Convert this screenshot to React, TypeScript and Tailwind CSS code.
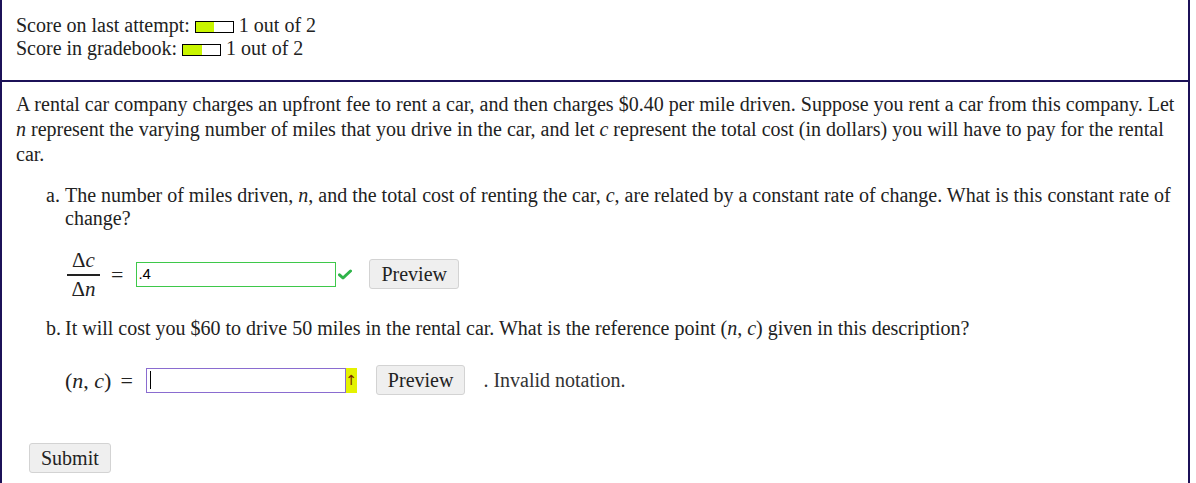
import React from "react";

function ScoreBar() {
  return (
    <span className="inline-block h-[12px] w-[39px] border border-black align-[-1px]">
      <span className="block h-full w-1/2 bg-[#c8f500]" />
    </span>
  );
}

function Check() {
  return (
    <svg viewBox="0 0 14 11" className="h-[11px] w-[14px]" aria-hidden>
      <path
        d="M1.5 5.8 L5 9 L12.5 2"
        fill="none"
        stroke="#2fb44a"
        strokeWidth="3"
        strokeLinecap="round"
        strokeLinejoin="round"
      />
    </svg>
  );
}

function Btn({ children }: { children: React.ReactNode }) {
  return (
    <button className="h-[30px] rounded-[3px] border border-[#d3d3d3] bg-[#efefef] px-[11px] text-[20px] leading-none text-[#222]">
      {children}
    </button>
  );
}

export default function App() {
  return (
    <div className="h-[483px] w-[1190px] border-x-2 border-[#1c1158] bg-white font-['Liberation_Serif',serif] text-[20px] text-[#222]">
      <div className="h-[82px] border-b-2 border-[#1c1158] pl-[14px] pt-[14px] leading-[23px]">
        <div>
          Score on last attempt: <ScoreBar /> 1 out of 2
        </div>
        <div>
          Score in gradebook: <ScoreBar /> 1 out of 2
        </div>
      </div>

      <div className="pl-[14px] pr-[12px] pt-[10px]">
        <p className="leading-[25px]">
          A rental car company charges an upfront fee to rent a car, and then charges $0.40 per mile driven. Suppose you rent a car from this company. Let{" "}
          <i>n</i> represent the varying number of miles that you drive in the car, and let <i>c</i> represent the total cost (in dollars) you will have to pay for the rental car.
        </p>

        <div className="mt-[17px] flex pl-[30px]">
          <span className="w-[19px] shrink-0 leading-[23px]">a.</span>
          <div className="flex-1">
            <p className="leading-[23px]">
              The number of miles driven, <i>n</i>, and the total cost of renting the car, <i>c</i>, are related by a constant rate of change. What is this constant rate of change?
            </p>

            <div className="mt-[20px] flex h-[48px] items-center">
              <span className="inline-flex flex-col items-center px-[2px] text-[21px] leading-[20px]">
                <span>
                  Δ<i>c</i>
                </span>
                <span className="mb-[3px] mt-[4px] h-[2px] w-[33px] bg-[#222]" />
                <span>
                  Δ<i>n</i>
                </span>
              </span>
              <span className="ml-[9px] text-[22px]">=</span>
              <span className="ml-[13px] flex h-[25px] w-[200px] items-center border border-[#3ec84a] px-[1px] font-['Liberation_Sans',sans-serif] text-[15px] text-black">
                .4
              </span>
              <span className="ml-[2px]">
                <Check />
              </span>
              <span className="ml-[17px]">
                <Btn>Preview</Btn>
              </span>
            </div>
          </div>
        </div>

        <div className="mt-[19px] flex pl-[30px]">
          <span className="w-[19px] shrink-0 leading-[23px]">b.</span>
          <div className="flex-1">
            <p className="leading-[23px]">
              It will cost you $60 to drive 50 miles in the rental car. What is the reference point (<i>n</i>, <i>c</i>) given in this description?
            </p>
            <div className="mt-[25px] flex h-[30px] items-center">
              <span className="text-[22px]">
                (<i>n</i>, <i>c</i>)<span className="ml-[9px]">=</span>
              </span>
              <span className="ml-[13px] flex h-[25px] w-[200px] items-center border border-[#8a6cd0] px-[3px]">
                <span className="h-[18px] w-px bg-black" />
              </span>
              <span className="flex h-[25px] w-[11px] items-center justify-center bg-[#e4f200] font-['DejaVu_Sans',sans-serif] text-[14px] text-[#7a2a00]">
                ↑
              </span>
              <span className="ml-[19px]">
                <Btn>Preview</Btn>
              </span>
              <span className="ml-[18px] text-[#333]">. Invalid notation.</span>
            </div>
          </div>
        </div>

        <div className="mt-[48px] pl-[13px]">
          <Btn>Submit</Btn>
        </div>
      </div>
    </div>
  );
}
